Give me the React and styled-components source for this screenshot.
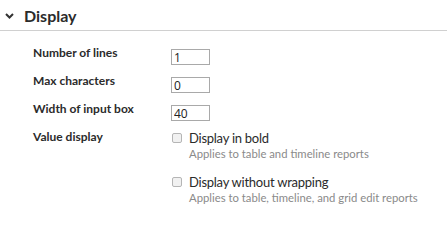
import React from 'react';
import styled, { createGlobalStyle } from 'styled-components';

const GlobalStyle = createGlobalStyle`
  body {
    margin: 0;
    background: #fff;
    font-family: Lato, 'Liberation Sans', sans-serif;
    color: #333;
  }
`;

const Section = styled.section`
  width: 447px;
`;

const SectionHeader = styled.div`
  display: flex;
  align-items: center;
  height: 28px;
  padding-top: 2px;
  border-bottom: 1px solid #d0d0d0;
  font-size: 16px;
  font-weight: 700;
  line-height: 20px;
  color: #2b2b2b;

  svg {
    margin: 0 10px 0 5px;
    flex: none;
  }
`;

const Form = styled.div`
  display: grid;
  grid-template-columns: 138px 1fr;
  grid-auto-rows: minmax(28px, auto);
  padding: 14px 0 23px 33px;
`;

const Label = styled.div`
  font-size: 12px;
  font-weight: 700;
  line-height: 16px;
  color: #2b2b2b;
`;

const TextInput = styled.input`
  box-sizing: border-box;
  width: 39px;
  height: 16px;
  margin: 4px 0 0;
  padding: 0 2px;
  border: 1px solid #a9a9a9;
  border-radius: 0;
  font-family: 'Open Sans', Lato, sans-serif;
  font-size: 12px;
  line-height: 14px;
  color: #222;
  outline: none;
`;

const Options = styled.div`
  display: flex;
  flex-direction: column;
  gap: 12px;
`;

const Option = styled.label`
  display: flex;
  align-items: flex-start;
`;

const Box = styled.span`
  box-sizing: border-box;
  flex: none;
  width: 10px;
  height: 10px;
  margin: 4px 7px 0 1px;
  border: 1px solid #b5b5b5;
  border-radius: 2px;
  background: #f1f1f1;
`;

const OptionText = styled.div`
  display: flex;
  flex-direction: column;
`;

const OptionTitle = styled.span`
  font-size: 13px;
  letter-spacing: -0.25px;
  line-height: 18px;
  color: #2b2b2b;
`;

const OptionHint = styled.span`
  font-size: 11.3px;
  line-height: 14px;
  color: #8a8a8a;
`;

const Chevron = () => (
  <svg width="9" height="6" viewBox="0 0 9 6">
    <path d="M1 1l3.5 3.5L8 1" fill="none" stroke="#333" strokeWidth="2" />
  </svg>
);

const fields = [
  { label: 'Number of lines', value: '1' },
  { label: 'Max characters', value: '0' },
  { label: 'Width of input box', value: '40' },
];

const options = [
  { title: 'Display in bold', hint: 'Applies to table and timeline reports' },
  { title: 'Display without wrapping', hint: 'Applies to table, timeline, and grid edit reports' },
];

export default function App() {
  return (
    <>
      <GlobalStyle />
      <Section>
        <SectionHeader>
          <Chevron />
          Display
        </SectionHeader>
        <Form>
          {fields.map((f) => (
            <React.Fragment key={f.label}>
              <Label>{f.label}</Label>
              <div>
                <TextInput defaultValue={f.value} />
              </div>
            </React.Fragment>
          ))}
          <Label>Value display</Label>
          <Options>
            {options.map((o) => (
              <Option key={o.title}>
                <Box />
                <OptionText>
                  <OptionTitle>{o.title}</OptionTitle>
                  <OptionHint>{o.hint}</OptionHint>
                </OptionText>
              </Option>
            ))}
          </Options>
        </Form>
        <SectionHeader>
          <Chevron />
          Advanced
        </SectionHeader>
      </Section>
    </>
  );
}
